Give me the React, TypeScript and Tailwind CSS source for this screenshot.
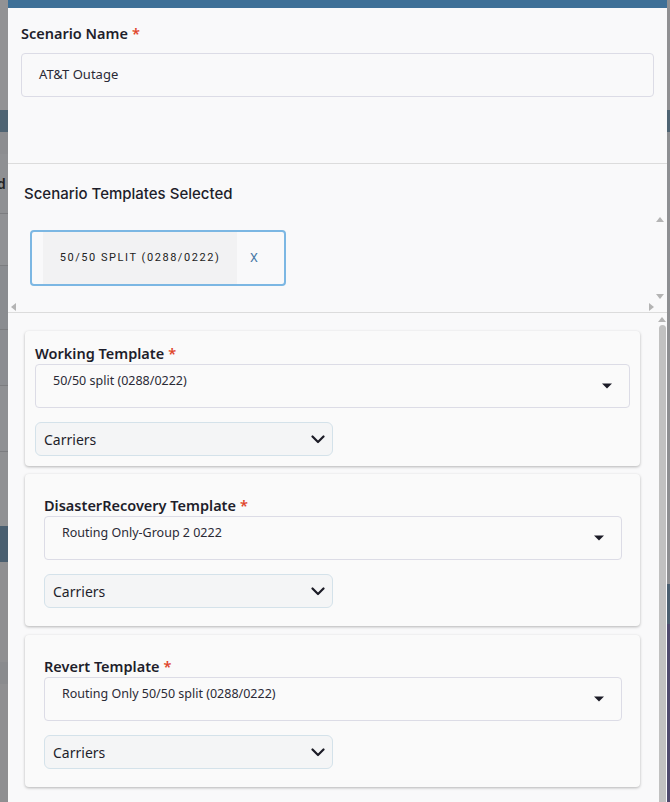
import React from "react";

const font = { fontFamily: '"Noto Sans", "Open Sans", Arial, sans-serif' };

function Star() {
  return <span className="ml-[4px] text-[#e0452a]">*</span>;
}

function Caret() {
  return (
    <svg width="10" height="6" viewBox="0 0 10 6" className="shrink-0">
      <path d="M0 0.5 L10 0.5 L5 5.5 Z" fill="#1b1b26" />
    </svg>
  );
}

function Chevron() {
  return (
    <svg width="14" height="9" viewBox="0 0 14 9" className="shrink-0">
      <path d="M1.5 1.5 L7 7 L12.5 1.5" fill="none" stroke="#1b1b26" strokeWidth="2.2" strokeLinecap="round" strokeLinejoin="round" />
    </svg>
  );
}

function Tri({ dir }: { dir: "up" | "down" | "left" | "right" }) {
  const d = {
    up: "M0 5 L4 0 L8 5 Z",
    down: "M0 0 L8 0 L4 5 Z",
    left: "M5 0 L5 8 L0 4 Z",
    right: "M0 0 L5 4 L0 8 Z",
  }[dir];
  const vertical = dir === "up" || dir === "down";
  return (
    <svg width={vertical ? 8 : 5} height={vertical ? 5 : 8} viewBox={vertical ? "0 0 8 5" : "0 0 5 8"}>
      <path d={d} fill="#b4b4b4" />
    </svg>
  );
}

interface TemplateCardProps {
  label: string;
  value: string;
  inset: "tight" | "wide";
}

function TemplateCard({ label, value, inset }: TemplateCardProps) {
  const wide = inset === "wide";
  return (
    <div
      className={`rounded-[4px] bg-[#fafafa] shadow-[0_1px_3px_rgba(0,0,0,0.28)] ${
        wide ? "pl-[19px] pr-[18px] pt-[21px] pb-[18px]" : "pl-[10px] pr-[10px] pt-[12px] pb-[10px]"
      }`}
    >
      <div className="text-[14.5px] font-semibold leading-[20px] text-[#1e1e2b]">
        {label}
        <Star />
      </div>
      <div className="mt-[1px] flex h-[44px] items-start justify-between rounded-[4px] border border-[#dcdce6] pl-[17px] pr-[17px] pt-[7px]">
        <span className="text-[12.5px] leading-[18px] text-[#2a2a36]">{value}</span>
        <span className="mt-[11px]">
          <Caret />
        </span>
      </div>
      <div
        className={`mt-[14px] flex h-[34px] items-center justify-between rounded-[6px] border border-[#d4e2ea] bg-[#f4f5f6] pl-[8px] pr-[7px] ${
          wide ? "w-[289px]" : "w-[298px]"
        }`}
      >
        <span className="text-[14px] text-[#1e1e2b]">Carriers</span>
        <Chevron />
      </div>
    </div>
  );
}

function LeftStrip() {
  return (
    <div className="flex w-[8px] shrink-0 flex-col overflow-hidden bg-[#8d8d8f]">
      <div className="h-[110px] bg-[#929294]" />
      <div className="h-[22px] bg-[#4f6473]" />
      <div className="h-[22px] bg-[#8c8d90]" />
      <div className="h-[60px] border-b border-[#7c7d80] bg-[#8f9093] text-[14px] font-semibold leading-[60px] text-[#222]">
        <span className="-ml-[3px]">d</span>
      </div>
      <div className="h-[52px] border-b border-[#7c7d80] bg-[#909194]" />
      <div className="h-[64px] border-b border-[#7c7d80] bg-[#8a8c90]" />
      <div className="h-[56px] border-b border-[#7c7d80] bg-[#8b8d91]" />
      <div className="h-[66px] border-b border-[#7c7d80] bg-[#8f9093]" />
      <div className="h-[74px] bg-[#909193]" />
      <div className="h-[36px] bg-[#4a5f70]" />
      <div className="h-[100px] bg-[#8f8f91]" />
      <div className="h-[22px] bg-[#8a8b8e]" />
      <div className="flex-1 bg-[#8f8f91]" />
    </div>
  );
}

function RightStrip() {
  return (
    <div className="flex w-[3px] shrink-0 flex-col bg-[#8e8e90]">
      <div className="h-[110px] bg-[#909092]" />
      <div className="h-[22px] bg-[#4f6473]" />
      <div className="h-[452px] bg-[#8e8f92]" />
      <div className="h-[40px] bg-[#4a5f70]" />
      <div className="flex-1 bg-[#4f4a6e]" />
    </div>
  );
}

export default function App() {
  return (
    <div className="flex h-[802px] w-[670px] overflow-hidden" style={font}>
      <LeftStrip />
      <div className="flex w-[659px] shrink-0 flex-col bg-[#f9f9fa]">
        <div className="h-[8px] bg-[#3e7097]" />

        {/* Scenario name */}
        <div className="h-[155px] px-[13px] pt-[15px]">
          <div className="text-[14.5px] font-semibold leading-[20px] text-[#1e1e2b]">
            Scenario Name
            <Star />
          </div>
          <div className="mt-[10px] flex h-[44px] items-center rounded-[4px] border border-[#dcdce6] pl-[17px]">
            <span className="text-[13px] text-[#2a2a36]">AT&amp;T Outage</span>
          </div>
        </div>

        {/* Selected templates */}
        <div className="relative h-[150px] border-y border-[#dcdcdc]">
          <div
            className="pl-[16px] pt-[20px] text-[15px] font-medium leading-[20px] text-[#1e1e2b]"
            style={{ fontFamily: 'Inter, "Noto Sans", sans-serif' }}
          >
            Scenario Templates Selected
          </div>
          <div className="ml-[22px] mt-[26px] flex h-[56px] w-[256px] rounded-[4px] border-2 border-[#7cb7e3] pl-[11px]">
            <div
              className="flex w-[194px] items-center justify-center bg-[#f2f2f3] text-[11px] tracking-[1.55px] text-[#222]"
              style={{ fontFamily: 'Roboto, "Noto Sans", sans-serif' }}
            >
              50/50 SPLIT (0288/0222)
            </div>
            <div
              className="flex flex-1 items-center pl-[13px] text-[12.5px] text-[#4a7aa6]"
              style={{ fontFamily: 'Roboto, "Noto Sans", sans-serif' }}
            >
              X
            </div>
          </div>
          <div className="absolute right-[3px] top-[53px]">
            <Tri dir="up" />
          </div>
          <div className="absolute right-[3px] top-[130px]">
            <Tri dir="down" />
          </div>
          <div className="absolute left-[3px] top-[139px]">
            <Tri dir="left" />
          </div>
          <div className="absolute right-[13px] top-[139px]">
            <Tri dir="right" />
          </div>
        </div>

        {/* Template cards */}
        <div className="relative flex-1 overflow-hidden">
          <div className="flex flex-col gap-[8px] pl-[17px] pr-[27px] pt-[18px]">
            <TemplateCard label="Working Template" value="50/50 split (0288/0222)" inset="tight" />
            <TemplateCard label="DisasterRecovery Template" value="Routing Only-Group 2 0222" inset="wide" />
            <div className="pt-[1px]">
              <TemplateCard label="Revert Template" value="Routing Only 50/50 split (0288/0222)" inset="wide" />
            </div>
          </div>
          <div className="absolute right-[1px] top-[4px]">
            <Tri dir="up" />
          </div>
          <div className="absolute bottom-0 right-[1px] top-[12px] w-[7px] rounded-t-[4px] bg-[#c1c1c1]" />
        </div>
      </div>
      <RightStrip />
    </div>
  );
}
